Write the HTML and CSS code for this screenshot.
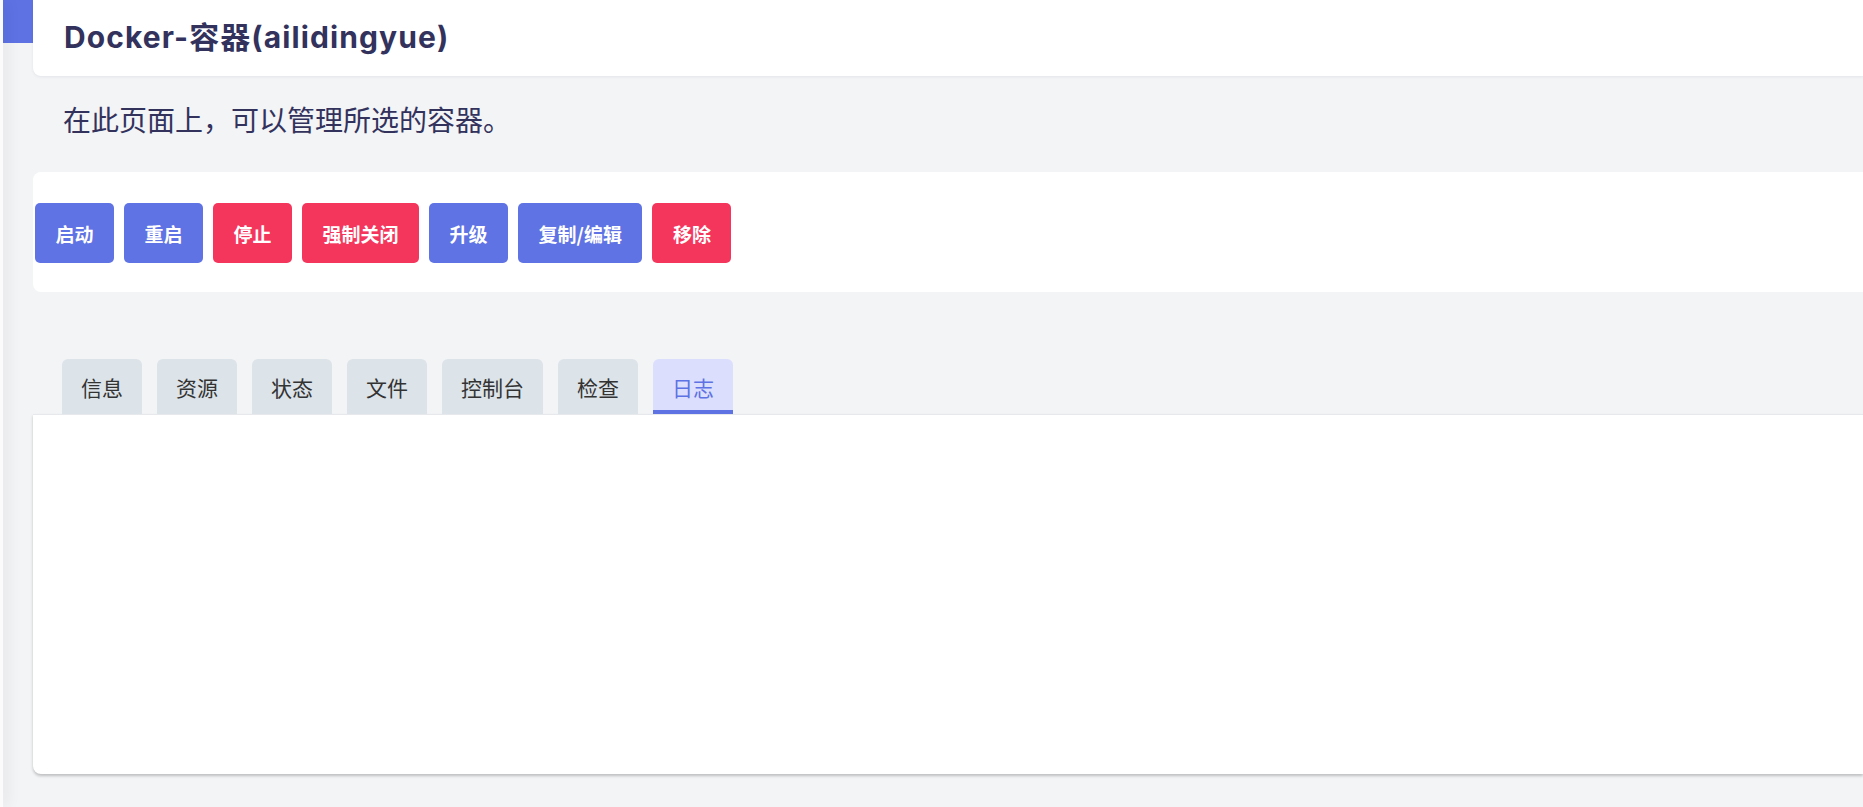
FILE: index.html
```html
<!DOCTYPE html>
<html lang="zh-CN">
<head>
<meta charset="utf-8">
<title>Docker-容器(ailidingyue)</title>
<link rel="stylesheet" href="styles.css">
</head>
<body>
<div class="layout">
  <aside class="sidebar"></aside>
  <main class="main">
    <header class="page-header">
      <h1 class="page-title">Docker-容器(ailidingyue)</h1>
    </header>
    <p class="page-desc">在此页面上，可以管理所选的容器。</p>
    <section class="actions-card">
      <button class="btn btn-primary">启动</button>
      <button class="btn btn-primary">重启</button>
      <button class="btn btn-danger">停止</button>
      <button class="btn btn-danger">强制关闭</button>
      <button class="btn btn-primary">升级</button>
      <button class="btn btn-primary">复制/编辑</button>
      <button class="btn btn-danger">移除</button>
    </section>
    <nav class="tabs">
      <div class="tab">信息</div>
      <div class="tab">资源</div>
      <div class="tab">状态</div>
      <div class="tab">文件</div>
      <div class="tab">控制台</div>
      <div class="tab">检查</div>
      <div class="tab tab-active">日志</div>
    </nav>
    <section class="tab-panel"></section>
  </main>
</div>
</body>
</html>
```
FILE: styles.css
```css
* { box-sizing: border-box; }
html, body { margin: 0; padding: 0; }
body {
  background: #f3f4f6;
  font-family: "Inter", "Noto Sans CJK SC", sans-serif;
  color: #32325d;
  overflow: hidden;
}
.layout {
  display: flex;
  min-height: 807px;
}
.sidebar {
  width: 3px;
  flex: 0 0 3px;
  background: #fbfbfc;
  box-shadow: 2px 0 14px rgba(0, 0, 0, 0.18);
  position: relative;
  z-index: 1;
}
.main {
  flex: 1;
  padding-left: 30px;
  background: linear-gradient(#5e72e4, #5e72e4) no-repeat 0 0 / 100% 43px, #f3f4f6;
}
.page-header {
  height: 76px;
  background: #fff;
  border-radius: 0 0 0 8px;
  box-shadow: 0 1px 3px rgba(50, 50, 93, 0.08);
  display: flex;
  align-items: center;
  padding-left: 31px;
  padding-bottom: 6px;
}
.page-title {
  margin: 0;
  font-family: "Inter", "Noto Sans CJK SC", sans-serif;
  font-size: 30px;
  font-weight: 700;
  color: #32325d;
  letter-spacing: 1.1px;
}
.page-desc {
  margin: 0;
  height: 96px;
  display: flex;
  align-items: center;
  padding-left: 30px;
  padding-bottom: 10px;
  font-family: "Noto Sans CJK SC", sans-serif;
  font-size: 28px;
  font-weight: 400;
  color: #32325d;
}
.actions-card {
  height: 120px;
  background: #fff;
  border-radius: 8px 0 0 8px;
  display: flex;
  align-items: center;
  gap: 10px;
  padding: 2px 0 0 2px;
}
.btn {
  height: 60px;
  padding: 0 20.5px;
  border: 0;
  border-radius: 5px;
  font-family: "Noto Sans CJK SC", sans-serif;
  font-size: 19px;
  font-weight: 700;
  color: #fff;
  cursor: pointer;
}
.btn-primary { background: #5f73e4; }
.btn-danger { background: #f5365c; }
.tabs {
  display: flex;
  gap: 15px;
  margin-top: 67px;
  padding-left: 29px;
}
.tab {
  height: 55px;
  padding: 0 19px;
  display: flex;
  align-items: center;
  background: #dce3e9;
  border-radius: 6px 6px 0 0;
  font-family: "Noto Sans CJK SC", sans-serif;
  font-size: 21px;
  color: #333;
}
.tab-active {
  background: #dbdffd;
  color: #5e72e4;
  border-bottom: 4px solid #5e72e4;
  padding-top: 4px;
}
.tab-panel {
  height: 360px;
  background: #fff;
  border-top: 1px solid #e6e8ec;
  border-radius: 0 0 0 8px;
  box-shadow: 0 2px 3px rgba(0, 0, 0, 0.22);
}
```
